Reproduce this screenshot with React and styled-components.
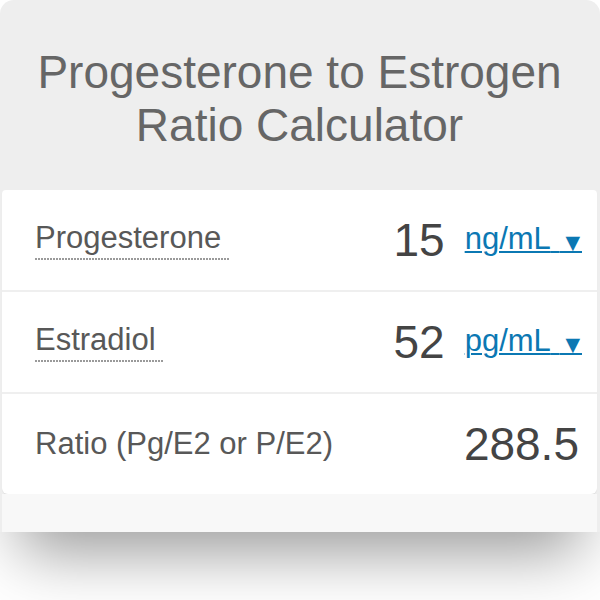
import React from "react";
import styled, { createGlobalStyle } from "styled-components";

const Global = createGlobalStyle`
  html, body {
    margin: 0;
    padding: 0;
    background: #ffffff;
  }
  body {
    font-family: "Liberation Sans", Arial, sans-serif;
  }
`;

const Page = styled.main`
  width: 600px;
  height: 600px;
  overflow: hidden;
  background: #ffffff;
`;

const Widget = styled.section`
  width: 600px;
  box-sizing: border-box;
  background: #eeeeee;
  border-radius: 14px 14px 0 0;
  padding: 0 3px 0 2px;
  box-shadow: 0 40px 60px -20px rgba(0, 0, 0, 0.4);
`;

const Title = styled.h1`
  margin: 0;
  height: 190px;
  box-sizing: border-box;
  padding-top: 46px;
  text-align: center;
  font-weight: 400;
  font-size: 46px;
  line-height: 53px;
  color: #666666;
`;

const Card = styled.div`
  background: #ffffff;
  border-radius: 4px 4px 6px 6px;
  box-shadow: 0 1px 1px rgba(0, 0, 0, 0.06);
`;

const Row = styled.div`
  display: flex;
  align-items: center;
  height: 100px;
  padding: 0 15px 0 33px;
  border-bottom: ${(p) => (p.$last ? "none" : "2px solid #efefef")};
`;

const Label = styled.span`
  margin-right: auto;
  font-size: 31px;
  line-height: 36px;
  color: #585858;
  padding-right: ${(p) => (p.$dotted ? "8px" : "0")};
  padding-bottom: ${(p) => (p.$dotted ? "4px" : "0")};
  background: ${(p) =>
    p.$dotted
      ? "linear-gradient(to right, #9a9a9a 60%, transparent 0) left bottom / 3px 2px repeat-x"
      : "none"};
`;

const Value = styled.span`
  font-size: 46px;
  line-height: 46px;
  color: #444444;
  margin-right: ${(p) => (p.$result ? "3px" : "0")};
`;

const Unit = styled.span`
  margin-left: 20px;
  font-size: 31px;
  line-height: 36px;
  color: #0b78b3;
  text-decoration: underline;
  text-decoration-thickness: 2px;
  text-underline-offset: 2px;
  cursor: pointer;
`;

const Caret = styled.span`
  font-family: "DejaVu Sans", sans-serif;
  font-size: 19px;
`;

const Footer = styled.div`
  height: 38px;
  background: #f8f8f8;
`;

const rows = [
  { label: "Progesterone", value: "15", unit: "ng/mL" },
  { label: "Estradiol", value: "52", unit: "pg/mL" },
];

export default function App() {
  return (
    <Page>
      <Global />
      <Widget>
        <Title>
          Progesterone to Estrogen
          <br />
          Ratio Calculator
        </Title>
        <Card>
          {rows.map((r) => (
            <Row key={r.label}>
              <Label $dotted>{r.label}</Label>
              <Value>{r.value}</Value>
              <Unit>
                {r.unit}
                {"\u00a0"}
                <Caret>{"\u00a0\u25BC\u200A"}</Caret>
              </Unit>
            </Row>
          ))}
          <Row $last>
            <Label>Ratio (Pg/E2 or P/E2)</Label>
            <Value $result>288.5</Value>
          </Row>
        </Card>
        <Footer />
      </Widget>
    </Page>
  );
}
